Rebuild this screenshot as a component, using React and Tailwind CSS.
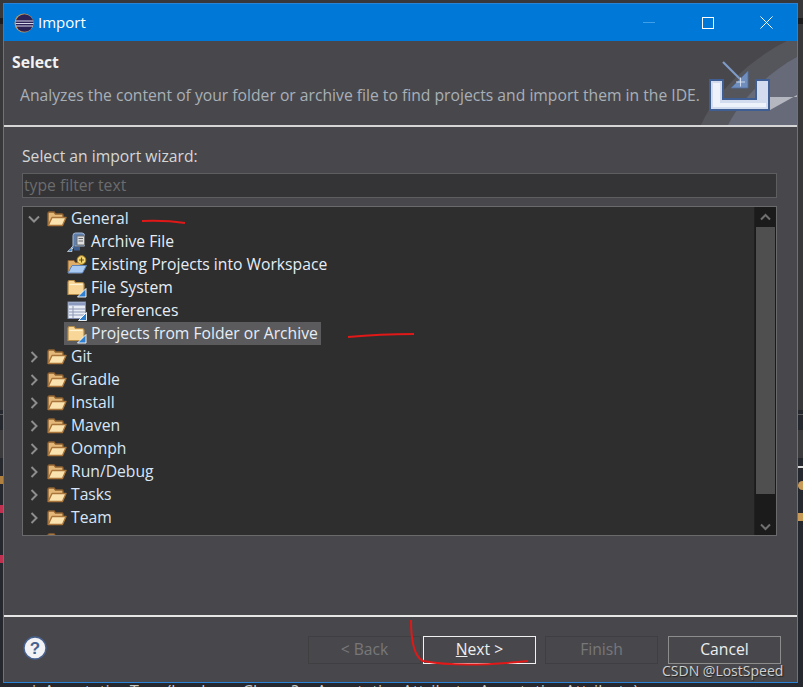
import React from "react";

const font = { fontFamily: '"Open Sans", "Noto Sans", sans-serif' };

function Folder() {
  return (
    <svg width="20" height="16" viewBox="0 0 20 16" className="shrink-0">
      <path d="M1 14.5V2.5Q1 1 2.5 1H7L8.5 3H15Q16 3 16 4V7" fill="#e3b878" stroke="#8f6130" strokeWidth="1.4" />
      <path d="M1.2 14.5L5 6.5H19L15.5 14.5Z" fill="#fbe3b0" stroke="#a9753a" strokeWidth="1.4" strokeLinejoin="round" />
    </svg>
  );
}

function ClosedFolder() {
  return (
    <svg width="20" height="20" viewBox="0 0 20 20" className="shrink-0">
      <path d="M1 16.5V4Q1 2.5 2.5 2.5H7L8.5 4.5H15Q17 4.5 17 6.5V16.5Z" fill="#f8d697" stroke="#b58b48" strokeWidth="1.2" />
      <path d="M2.5 6.5H15.5" stroke="#fff2d2" strokeWidth="1.2" />
      <path d="M10.5 19L19 10.5V19Z" fill="#2f7fd0" stroke="#fff" strokeWidth="0.9" />
    </svg>
  );
}

function ArchiveIcon() {
  return (
    <svg width="20" height="20" viewBox="0 0 20 20" className="shrink-0">
      <path d="M6 17Q3 15.5 6 14V3.5Q6 1 8.5 1H15Q17.5 1 17.5 3.5V14H8" fill="#5e7fae" stroke="#a5bad6" />
      <rect x="10" y="4" width="7.5" height="9" fill="#dedede" stroke="#6d6d6d" />
      <path d="M11.5 6.5H16M11.5 9H16" stroke="#666" />
      <path d="M0.5 19.5L5 15.5V19.5Z" fill="#2f7fd0" stroke="#fff" strokeWidth="0.6" />
      <path d="M7 15H13V18.5H7Z" fill="#3e5f90" />
    </svg>
  );
}

function ExistingIcon() {
  return (
    <svg width="20" height="20" viewBox="0 0 20 20" className="shrink-0">
      <path d="M1 18V5.5H7L8.5 7.5H14V18Z" fill="#dcae6a" stroke="#8f6130" />
      <path d="M1 18L5 10.5H19.5L15.5 18Z" fill="#a9caf2" stroke="#5d82b8" />
      <circle cx="14.5" cy="5" r="4.3" fill="#f8d874" stroke="#b08a2c" />
      <path d="M14.5 2.6V7.4M12.1 5H16.9" stroke="#6b4f10" strokeWidth="1.2" />
    </svg>
  );
}

function PrefIcon() {
  return (
    <svg width="20" height="20" viewBox="0 0 20 20" className="shrink-0">
      <rect x="1" y="1" width="17.5" height="16.5" fill="#e8ecf4" stroke="#7f8ba8" />
      <rect x="1.5" y="1.5" width="16.5" height="3" fill="#8a9ac0" />
      <path d="M2 8H18M2 11H18M2 14H18M6 5V17" stroke="#8c98b5" />
      <path d="M11.5 19.5L19.5 11.5V19.5Z" fill="#2f7fd0" stroke="#fff" strokeWidth="0.9" />
    </svg>
  );
}

function Chevron({ open }) {
  return (
    <svg width="14" height="14" viewBox="0 0 14 14" className="shrink-0">
      <path d={open ? "M2 4.5L7 9.5L12 4.5" : "M4.5 2L9.5 7L4.5 12"} fill="none" stroke="#8d8d8d" strokeWidth="2" />
    </svg>
  );
}

function TreeHead({ label, open }) {
  return (
    <div className="flex h-[23px] items-center pl-[4px] text-[#d8e6f7]">
      <Chevron open={open} />
      <span className="ml-[6px]"><Folder /></span>
      <span className="ml-[4px] leading-none">{label}</span>
    </div>
  );
}

function ChildRow({ icon, label, selected }) {
  return (
    <div className="flex h-[23px] items-center pl-[41px] text-[#e6edf6]">
      <div className={"flex h-[23px] items-center pl-[3px] pr-[3px] " + (selected ? "bg-[#5b5b5d]" : "")}>
        {icon}
        <span className="ml-[4px] leading-none">{label}</span>
      </div>
    </div>
  );
}

function Btn({ children, kind, className }) {
  const cls =
    kind === "off"
      ? "border-[#3f3f42] text-[#77777a]"
      : kind === "focus"
      ? "border-[#f0f0f0] text-[#eeeeee]"
      : "border-[#8c8c8c] text-[#eeeeee]";
  return (
    <div className={"flex h-[28px] w-[113px] shrink-0 items-center justify-center border " + cls + " " + (className || "")}>
      {children}
    </div>
  );
}

export default function App() {
  return (
    <div className="relative h-[687px] w-[803px] overflow-hidden bg-[#38383a] text-[15.7px]" style={font}>
      {/* what lies behind the dialog, at the screen edges */}
      <div className="absolute left-0 top-[18px] h-[6px] w-full bg-[#1c1c1e]" />
      <div className="absolute left-0 top-[410px] h-[277px] w-full bg-[#25282e]" />
      <div className="absolute left-0 top-[414px] h-px w-full bg-[#5a5a5c]" />
      <div className="absolute left-0 top-[430px] h-[28px] w-full bg-[#3b3b3e]" />
      <div className="absolute left-[798px] top-[466px] h-[2px] w-[5px] bg-[#d8d8d8]" />
      <div className="absolute left-0 top-[476px] h-[8px] w-[3px] bg-[#b08040]" />
      <div className="absolute left-0 top-[505px] h-[8px] w-[3px] bg-[#c03050]" />
      <div className="absolute left-0 top-[555px] h-[8px] w-[3px] bg-[#c03050]" />
      <div className="absolute left-[798px] top-[481px] h-[9px] w-[5px] rounded-l-full bg-[#c89a58]" />
      <div className="absolute left-[798px] top-[513px] h-[8px] w-[5px] bg-[#c89a58]" />

      <div className="relative ml-[3px] mt-[3px] flex h-[680px] w-[795px] flex-col border border-[#2a83d6] bg-[#48484c]">
        <div className="flex h-[37px] shrink-0 items-center bg-[#0078d7] pl-[10px] text-[15px] text-white">
          <svg width="20" height="20" viewBox="0 0 20 20" className="shrink-0">
            <circle cx="10" cy="10" r="9.5" fill="#c89a58" />
            <circle cx="10.5" cy="10" r="8.8" fill="#2c2255" />
            <path d="M1.7 8H19.3M1.5 10.5H19.5M2 13H19" stroke="#d9d9ee" strokeWidth="1.2" />
          </svg>
          <span className="ml-[4px]">Import</span>
          <div className="ml-auto flex items-center">
            <div className="h-px w-[12px] bg-[#3f9fe8]" />
            <div className="ml-[47px] h-[12px] w-[12px] border border-white" />
            <svg width="13" height="13" viewBox="0 0 13 13" className="ml-[46px] mr-[24px]">
              <path d="M0.5 0.5L12.5 12.5M12.5 0.5L0.5 12.5" stroke="#fff" strokeWidth="1" />
            </svg>
          </div>
        </div>

        <div className="relative h-[84px] shrink-0 overflow-hidden pl-[8px] pt-[11px]">
          <svg width="102" height="84" viewBox="0 0 102 84" className="absolute right-0 top-0">
            <path d="M6 84C20 52 55 18 92 0H102V84Z" fill="#55555c" />
            <path d="M33 84C45 60 72 32 102 16V84Z" fill="#676a78" />
            <path d="M70 56H102V54L75 69Z" fill="#b4b7bf" />
            <path d="M15 39H28V58H61V39H74V69H15Z" fill="#d3dcee" stroke="#3f5f94" strokeWidth="2" />
            <path d="M18 42H25V62H71V66H18Z" fill="#eef2fa" />
            <path d="M36 47L53 30V47Z" fill="#6f8dbd" stroke="#4f6fa2" strokeWidth="0.8" />
            <path d="M28 21L46 39" stroke="#7f9bc7" strokeWidth="2.2" />
            <path d="M41 41H50M45.5 36.5V45.5" stroke="#e8eef8" strokeWidth="0.8" />
          </svg>
          <div className="relative font-bold leading-[20px] text-[#f2f2f2]">Select</div>
          <div className="relative ml-[8px] mt-[13px] whitespace-nowrap leading-[20px] text-[#a9b0b8]">
            Analyzes the content of your folder or archive file to find projects and import them in the IDE.
          </div>
        </div>

        <div className="h-[2px] shrink-0 bg-[#d6d6d6]" />

        <div className="flex min-h-0 flex-1 flex-col pl-[18px] pr-[20px]">
          <div className="mt-[19px] h-[20px] leading-[20px] text-[#d6d6d6]">Select an import wizard:</div>
          <div className="mt-[7px] flex h-[25px] shrink-0 items-center border border-[#5e5e60] bg-[#343436] pl-[1px] text-[#6c6c6e]">
            type filter text
          </div>
          <div className="mt-[8px] flex h-[330px] shrink-0 overflow-hidden border border-[#6a6a6c] bg-[#2e2e2e]">
            <div className="min-w-0 flex-1 overflow-hidden">
              <TreeHead label="General" open />
              <ChildRow icon={<ArchiveIcon />} label="Archive File" />
              <ChildRow icon={<ExistingIcon />} label="Existing Projects into Workspace" />
              <ChildRow icon={<ClosedFolder />} label="File System" />
              <ChildRow icon={<PrefIcon />} label="Preferences" />
              <ChildRow icon={<ClosedFolder />} label="Projects from Folder or Archive" selected />
              {["Git", "Gradle", "Install", "Maven", "Oomph", "Run/Debug", "Tasks", "Team", ""].map((t, i) => (
                <TreeHead key={i} label={t} />
              ))}
            </div>
            <div className="flex w-[22px] shrink-0 flex-col border-l border-[#202020] bg-[#1b1b1b]">
              <div className="flex h-[20px] shrink-0 items-center justify-center">
                <svg width="11" height="8" viewBox="0 0 11 8"><path d="M1 6.5L5.5 2L10 6.5" fill="none" stroke="#6f6f6f" strokeWidth="2" /></svg>
              </div>
              <div className="mx-px h-[267px] shrink-0 bg-[#4f4f4f]" />
              <div className="flex flex-1 items-end justify-center pb-[4px]">
                <svg width="11" height="8" viewBox="0 0 11 8"><path d="M1 1.5L5.5 6L10 1.5" fill="none" stroke="#6f6f6f" strokeWidth="2" /></svg>
              </div>
            </div>
          </div>
        </div>

        <div className="h-[2px] shrink-0 bg-[#e6e6e6]" />

        <div className="flex h-[65px] shrink-0 items-start pl-[19px] pt-[19px]">
          <svg width="24" height="24" viewBox="0 0 24 24" className="shrink-0">
            <circle cx="12" cy="12" r="11" fill="#f2f2f5" stroke="#46618f" strokeWidth="1.4" />
            <text x="12" y="18" textAnchor="middle" fontSize="17" fontWeight="700" fill="#46618f" fontFamily="Liberation Sans, sans-serif">?</text>
          </svg>
          <Btn kind="off" className="ml-[261px]">&lt; Back</Btn>
          <Btn kind="focus" className="ml-[2px]"><span><span className="underline">N</span>ext &gt;</span></Btn>
          <Btn kind="off" className="ml-[9px]">Finish</Btn>
          <Btn className="ml-[10px]">Cancel</Btn>
        </div>
      </div>

      <div className="absolute left-[662px] top-[662px] text-[14px] leading-[18px] text-[#cfcfcf]" style={{ textShadow: "1px 1px 1px #222" }}>
        CSDN @LostSpeed
      </div>

      <svg width="803" height="687" viewBox="0 0 803 687" className="pointer-events-none absolute left-0 top-0">
        <path d="M142 221Q165 220 185 223" fill="none" stroke="#e01818" strokeWidth="2" />
        <path d="M348 337Q380 334 414 334" fill="none" stroke="#e01818" strokeWidth="2" />
        <path d="M411 620Q411 655 423 661Q460 668 528 661" fill="none" stroke="#e01818" strokeWidth="2" />
      </svg>

      <div className="absolute left-[32px] top-[682px] whitespace-nowrap text-[16.5px] leading-[18px] text-[#c8c8c8]">
        isAnnotationType(boolean, Class&lt;?&gt;, AnnotationAttribute, AnnotationAttribute)
      </div>
    </div>
  );
}
